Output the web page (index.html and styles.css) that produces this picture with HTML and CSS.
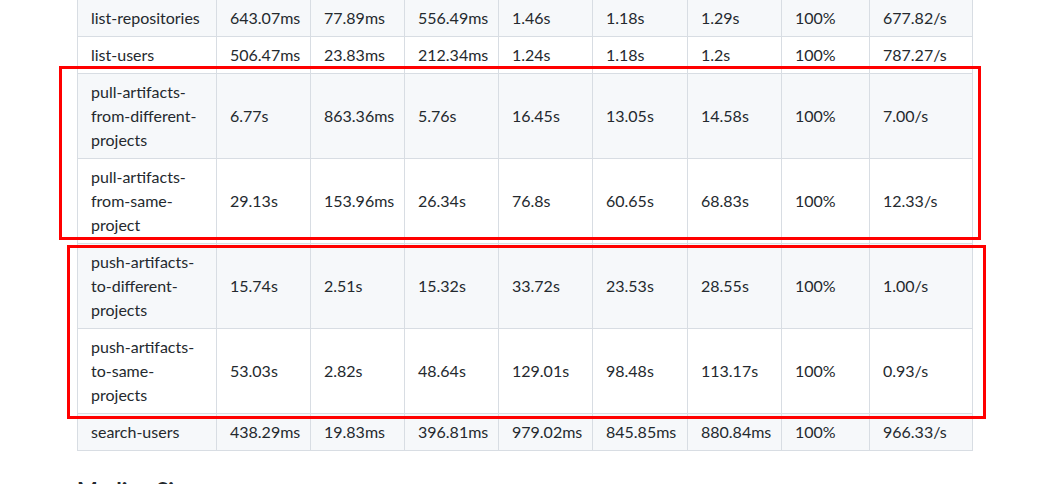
FILE: index.html
```html
<!DOCTYPE html>
<html>
<head>
<meta charset="utf-8">
<link rel="stylesheet" href="styles.css">
</head>
<body>
<div class="page">
  <div class="table-wrap">
    <table class="results">
      <colgroup>
        <col class="c-name"><col class="c-n"><col class="c-n"><col class="c-n"><col class="c-n"><col class="c-n6"><col class="c-n"><col class="c-pct"><col class="c-rate">
      </colgroup>
      <tbody>
        <tr><td>list-repositories</td><td>643.07ms</td><td>77.89ms</td><td>556.49ms</td><td>1.46s</td><td>1.18s</td><td>1.29s</td><td>100%</td><td>677.82/s</td></tr>
        <tr><td>list-users</td><td>506.47ms</td><td>23.83ms</td><td>212.34ms</td><td>1.24s</td><td>1.18s</td><td>1.2s</td><td>100%</td><td>787.27/s</td></tr>
        <tr><td>pull-artifacts-from-different-projects</td><td>6.77s</td><td>863.36ms</td><td>5.76s</td><td>16.45s</td><td>13.05s</td><td>14.58s</td><td>100%</td><td>7.00/s</td></tr>
        <tr><td>pull-artifacts-from-same-project</td><td>29.13s</td><td>153.96ms</td><td>26.34s</td><td>76.8s</td><td>60.65s</td><td>68.83s</td><td>100%</td><td>12.33/s</td></tr>
        <tr><td>push-artifacts-to-different-projects</td><td>15.74s</td><td>2.51s</td><td>15.32s</td><td>33.72s</td><td>23.53s</td><td>28.55s</td><td>100%</td><td>1.00/s</td></tr>
        <tr><td>push-artifacts-to-same-projects</td><td>53.03s</td><td>2.82s</td><td>48.64s</td><td>129.01s</td><td>98.48s</td><td>113.17s</td><td>100%</td><td>0.93/s</td></tr>
        <tr><td>search-users</td><td>438.29ms</td><td>19.83ms</td><td>396.81ms</td><td>979.02ms</td><td>845.85ms</td><td>880.84ms</td><td>100%</td><td>966.33/s</td></tr>
      </tbody>
    </table>
    <div class="mark mark-pull"></div>
    <div class="mark mark-push"></div>
  </div>
  <h3 class="section-title">Median Size</h3>
</div>
</body>
</html>
```

FILE: styles.css
```css
html, body {
  margin: 0;
  padding: 0;
  background: #ffffff;
}

.page {
  padding-left: 77px;
  font-family: Lato, "Liberation Sans", sans-serif;
  font-size: 16px;
  line-height: 24px;
  color: #24292e;
}

.table-wrap {
  position: relative;
  margin-top: -1px;
}

.results {
  border-collapse: collapse;
  border-spacing: 0;
  table-layout: fixed;
  width: 895px;
}

.c-name { width: 139px; }
.c-n { width: 94px; }
.c-n6 { width: 95px; }
.c-pct { width: 88px; }
.c-rate { width: 103px; }

.results td {
  border: 1px solid #d8dde3;
  padding: 6px 13px;
  vertical-align: middle;
  white-space: normal;
}

.results tr {
  background: #ffffff;
}

.results tr:nth-child(odd) {
  background: #f6f8fa;
}

.mark {
  position: absolute;
  border: 3px solid #ff0000;
  box-sizing: border-box;
  pointer-events: none;
}

.mark-pull {
  left: -18px;
  top: 67px;
  width: 922px;
  height: 174px;
}

.mark-push {
  left: -10px;
  top: 246px;
  width: 919px;
  height: 174px;
}

.section-title {
  margin: 27px 0 16px;
  font-size: 22px;
  line-height: 25px;
  font-weight: 700;
}
```
